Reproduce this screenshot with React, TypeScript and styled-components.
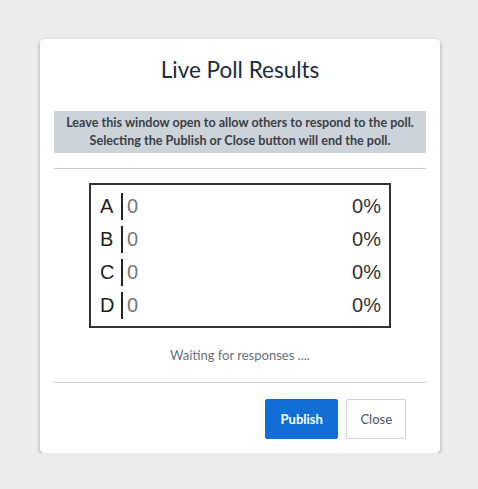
import React from 'react';
import styled, { createGlobalStyle } from 'styled-components';

const GlobalStyle = createGlobalStyle`
  html, body {
    margin: 0;
    padding: 0;
    background: #ececec;
    font-family: Lato, "Noto Sans", sans-serif;
  }
`;

const Page = styled.div`
  padding: 39px 0 0 40px;
`;

const Card = styled.div`
  width: 400px;
  box-sizing: border-box;
  background: #fff;
  border-radius: 4px;
  box-shadow: 0 2px 4px rgba(0, 0, 0, 0.35);
  padding: 16px 14px 14px;
`;

const Title = styled.h2`
  margin: 0;
  text-align: center;
  font-size: 22.5px;
  line-height: 30px;
  font-weight: 400;
  color: #1c2b3b;
`;

const Notice = styled.div`
  margin-top: 26px;
  background: #cdd3db;
  padding: 3px 4px;
  text-align: center;
  font-size: 12.6px;
  line-height: 18px;
  font-weight: 700;
  color: #3a3f45;
`;

const Divider = styled.hr<{ $gap: number }>`
  margin: ${(p) => p.$gap}px 0 0;
  border: 0;
  border-top: 1px solid #c9cdd1;
`;

const ResultsBox = styled.div`
  width: 302px;
  box-sizing: border-box;
  margin: 14px auto 0;
  border: 2px solid #333;
  padding: 5px 8px 4px 9px;
  font-family: "Liberation Sans", Arial, sans-serif;
  font-size: 20px;
`;

const Row = styled.div`
  display: flex;
  align-items: center;
  height: 33px;
`;

const Letter = styled.span`
  width: 21px;
  color: #222;
`;

const Count = styled.span`
  flex: 1;
  border-left: 2px solid #222;
  padding-left: 4px;
  line-height: 27px;
  color: #777;
`;

const Percent = styled.span`
  color: #333;
`;

const Waiting = styled.div`
  margin-top: 18px;
  text-align: center;
  font-size: 13px;
  line-height: 18px;
  color: #68717a;
`;

const Footer = styled.div`
  display: flex;
  justify-content: flex-end;
  gap: 8px;
  padding: 16px 20px 0 0;
`;

const Button = styled.button<{ $primary?: boolean }>`
  height: 40px;
  box-sizing: border-box;
  border-radius: 2px;
  font-family: Lato, "Noto Sans", sans-serif;
  font-size: 13px;
  padding: 0 ${(p) => (p.$primary ? 14.5 : 13)}px;
  cursor: pointer;
  border: 1px solid ${(p) => (p.$primary ? '#0f6fd6' : '#cdd3dc')};
  background: ${(p) => (p.$primary ? '#0f6fd6' : '#fff')};
  color: ${(p) => (p.$primary ? '#fff' : '#4b535c')};
  font-weight: ${(p) => (p.$primary ? 700 : 400)};
`;

const options = ['A', 'B', 'C', 'D'];

export default function App() {
  return (
    <>
      <GlobalStyle />
      <Page>
        <Card>
          <Title>Live Poll Results</Title>
          <Notice>
            Leave this window open to allow others to respond to the poll.
            <br />
            Selecting the Publish or Close button will end the poll.
          </Notice>
          <Divider $gap={15} />
          <ResultsBox>
            {options.map((o) => (
              <Row key={o}>
                <Letter>{o}</Letter>
                <Count>0</Count>
                <Percent>0%</Percent>
              </Row>
            ))}
          </ResultsBox>
          <Waiting>Waiting for responses ....</Waiting>
          <Divider $gap={18} />
          <Footer>
            <Button $primary>Publish</Button>
            <Button>Close</Button>
          </Footer>
        </Card>
      </Page>
    </>
  );
}
